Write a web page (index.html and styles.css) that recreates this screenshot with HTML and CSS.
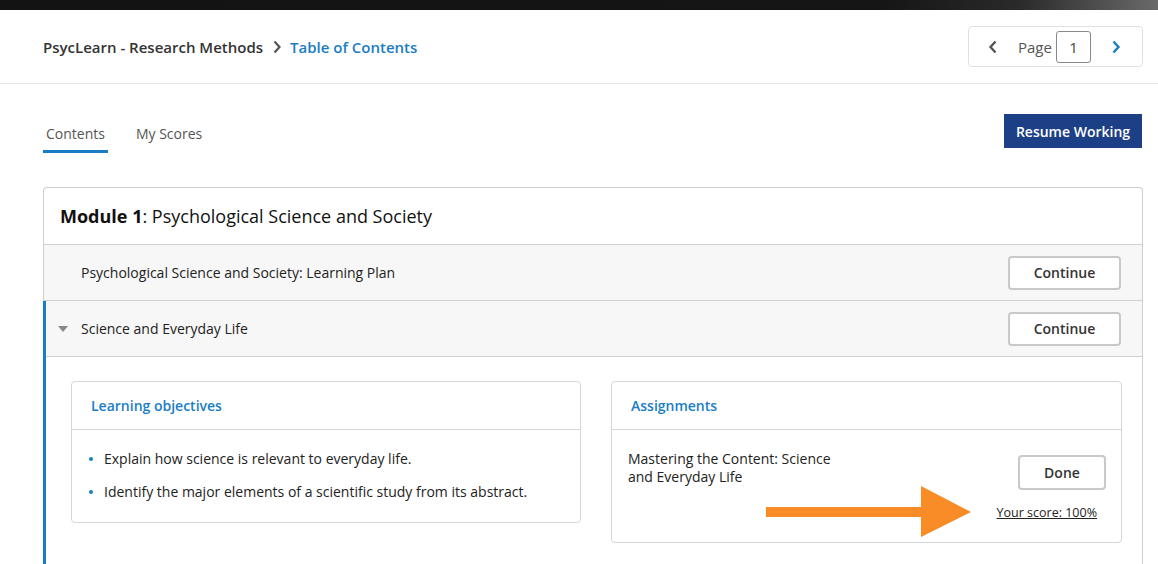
FILE: index.html
```html
<!DOCTYPE html>
<html lang="en">
<head>
<meta charset="utf-8">
<title>PsycLearn - Table of Contents</title>
<link rel="stylesheet" href="styles.css">
</head>
<body>
<div class="topbar"></div>
<header class="header">
  <nav class="crumbs">
    <span class="crumb">PsycLearn - Research Methods</span>
    <svg class="crumb-sep" width="10" height="14" viewBox="0 0 10 14"><path d="M2.5 1.5 L7.5 7 L2.5 12.5" fill="none" stroke="#555" stroke-width="2.2"/></svg>
    <span class="crumb current">Table of Contents</span>
  </nav>
  <div class="pager">
    <svg class="pg-arrow" width="10" height="14" viewBox="0 0 10 14"><path d="M7.5 1.5 L2.5 7 L7.5 12.5" fill="none" stroke="#555" stroke-width="2.4"/></svg>
    <span class="pg-label">Page</span>
    <span class="pg-input">1</span>
    <svg class="pg-arrow next" width="10" height="14" viewBox="0 0 10 14"><path d="M2.5 1.5 L7.5 7 L2.5 12.5" fill="none" stroke="#1a7dc4" stroke-width="2.4"/></svg>
  </div>
</header>
<main class="main">
  <div class="toolbar">
    <div class="tabs">
      <span class="tab active">Contents</span>
      <span class="tab">My Scores</span>
    </div>
    <button class="btn-primary">Resume Working</button>
  </div>
  <section class="module">
    <h2 class="module-title"><b>Module 1</b>: Psychological Science and Society</h2>
    <div class="row">
      <span class="row-title">Psychological Science and Society: Learning Plan</span>
      <button class="btn">Continue</button>
    </div>
    <div class="active-block">
      <div class="row">
        <svg class="caret" width="10" height="6" viewBox="0 0 10 6"><path d="M0 0 H10 L5 6 Z" fill="#888"/></svg>
        <span class="row-title">Science and Everyday Life</span>
        <button class="btn">Continue</button>
      </div>
      <div class="expanded">
        <div class="panel">
          <div class="panel-head">Learning objectives</div>
          <ul class="objectives">
            <li>Explain how science is relevant to everyday life.</li>
            <li>Identify the major elements of a scientific study from its abstract.</li>
          </ul>
        </div>
        <div class="panel">
          <div class="panel-head">Assignments</div>
          <div class="assignment">
            <span class="assign-title">Mastering the Content: Science and Everyday Life</span>
            <div class="assign-actions">
              <button class="btn btn-done">Done</button>
              <a class="score" href="#">Your score: 100%</a>
            </div>
            <svg class="annot-arrow" width="206" height="52" viewBox="0 0 206 52"><path d="M0 21 H155 V0 L205 26 L155 51 V31 H0 Z" fill="#fa8c28"/></svg>
          </div>
        </div>
      </div>
    </div>
  </section>
</main>
</body>
</html>
```
FILE: styles.css
```css
* { box-sizing: border-box; }
body {
  margin: 0;
  font-family: "Open Sans", "Liberation Sans", sans-serif;
  color: #222;
  background: #fff;
  overflow: hidden;
}
.topbar {
  height: 10px;
  background: linear-gradient(to right, #131313 0%, #151515 76%, #2a2a2a 88%, #6a6a6a 100%);
}
.header {
  height: 74px;
  border-bottom: 1px solid #e6e6e6;
  display: flex;
  align-items: center;
  justify-content: space-between;
  padding: 0 15px 0 43px;
}
.crumbs {
  display: flex;
  align-items: center;
  font-size: 15px;
  font-weight: 600;
}
.crumb { color: #333; }
.crumb.current { color: #1a7dc4; }
.crumb-sep { margin: 0 8px 0 9px; }
.pager {
  width: 175px;
  height: 41px;
  border: 1px solid #e0e0e0;
  border-radius: 4px;
  display: flex;
  align-items: center;
  padding-left: 19px;
}
.pg-label {
  font-size: 15px;
  color: #555;
  margin-left: 20px;
}
.pg-input {
  width: 35px;
  height: 32px;
  border: 1px solid #8a8a8a;
  border-radius: 3px;
  margin-left: 4px;
  display: flex;
  align-items: center;
  justify-content: center;
  font-size: 15px;
  color: #444;
}
.pg-arrow.next { margin-left: 20px; }
.main { padding: 0 15px 0 43px; }
.toolbar {
  margin-top: 30px;
  display: flex;
  justify-content: space-between;
  align-items: flex-start;
}
.tabs { display: flex; gap: 25px; }
.tab {
  font-size: 14px;
  line-height: 20px;
  color: #555;
  padding: 10px 3px 6px;
  border-bottom: 3px solid transparent;
}
.tab.active { border-bottom-color: #1a7dc4; }
.btn-primary {
  width: 138px;
  height: 34px;
  margin-right: 1px;
  background: #1c3f86;
  color: #fff;
  border: none;
  font-family: inherit;
  font-size: 14px;
  font-weight: 600;
  padding: 0;
}
.module {
  margin-top: 34px;
  border: 1px solid #cfcfcf;
  border-bottom: none;
  border-radius: 4px 4px 0 0;
  height: 380px;
}
.module-title {
  margin: 0;
  height: 57px;
  display: flex;
  align-items: center;
  padding-left: 16px;
  font-size: 18px;
  font-weight: 400;
  color: #111;
  border-bottom: 1px solid #cfcfcf;
}
.module-title b { font-weight: 700; }
.row {
  height: 56px;
  background: #f7f7f7;
  border-bottom: 1px solid #cfcfcf;
  display: flex;
  align-items: center;
  padding: 0 21px 0 37px;
}
.row-title { font-size: 14px; color: #222; flex: 1; }
.btn {
  width: 113px;
  height: 34px;
  background: #fff;
  border: 2px solid #c9c9c9;
  border-radius: 4px;
  font-family: inherit;
  font-size: 14px;
  font-weight: 600;
  color: #333;
  padding: 0;
}
.active-block {
  margin-left: -1px;
  border-left: 3px solid #1a7dc4;
  height: 100%;
}
.active-block .row { padding-left: 12px; }
.caret { margin-right: 13px; }
.expanded {
  display: grid;
  grid-template-columns: 510px 511px;
  column-gap: 30px;
  align-items: start;
  padding: 24px 0 0 25px;
}
.panel {
  border: 1px solid #d6d6d6;
  border-radius: 4px;
}
.panel-head {
  height: 48px;
  border-bottom: 1px solid #d6d6d6;
  display: flex;
  align-items: center;
  padding-left: 19px;
  font-size: 14px;
  font-weight: 600;
  color: #1a7dc4;
}
.objectives {
  list-style: none;
  margin: 0;
  padding: 19px 16px 20px 17px;
}
.objectives li {
  position: relative;
  font-size: 14px;
  line-height: 20px;
  padding-left: 15px;
}
.objectives li + li { margin-top: 13px; }
.objectives li::before {
  content: "";
  position: absolute;
  left: 0;
  top: 8px;
  width: 4px;
  height: 4px;
  border-radius: 50%;
  background: #1a7dc4;
}
.assignment {
  position: relative;
  display: flex;
  justify-content: space-between;
  padding: 20px 15px 21px 16px;
}
.assign-title {
  width: 215px;
  font-size: 14px;
  line-height: 18px;
}
.assign-actions {
  display: flex;
  flex-direction: column;
  align-items: flex-end;
  padding-top: 5px;
}
.btn-done {
  width: 88px;
  height: 35px;
}
.score {
  margin-top: 14px;
  margin-right: 9px;
  font-size: 12.5px;
  color: #222;
  text-decoration: underline;
}
.annot-arrow {
  position: absolute;
  left: 154px;
  top: 56px;
}
```
